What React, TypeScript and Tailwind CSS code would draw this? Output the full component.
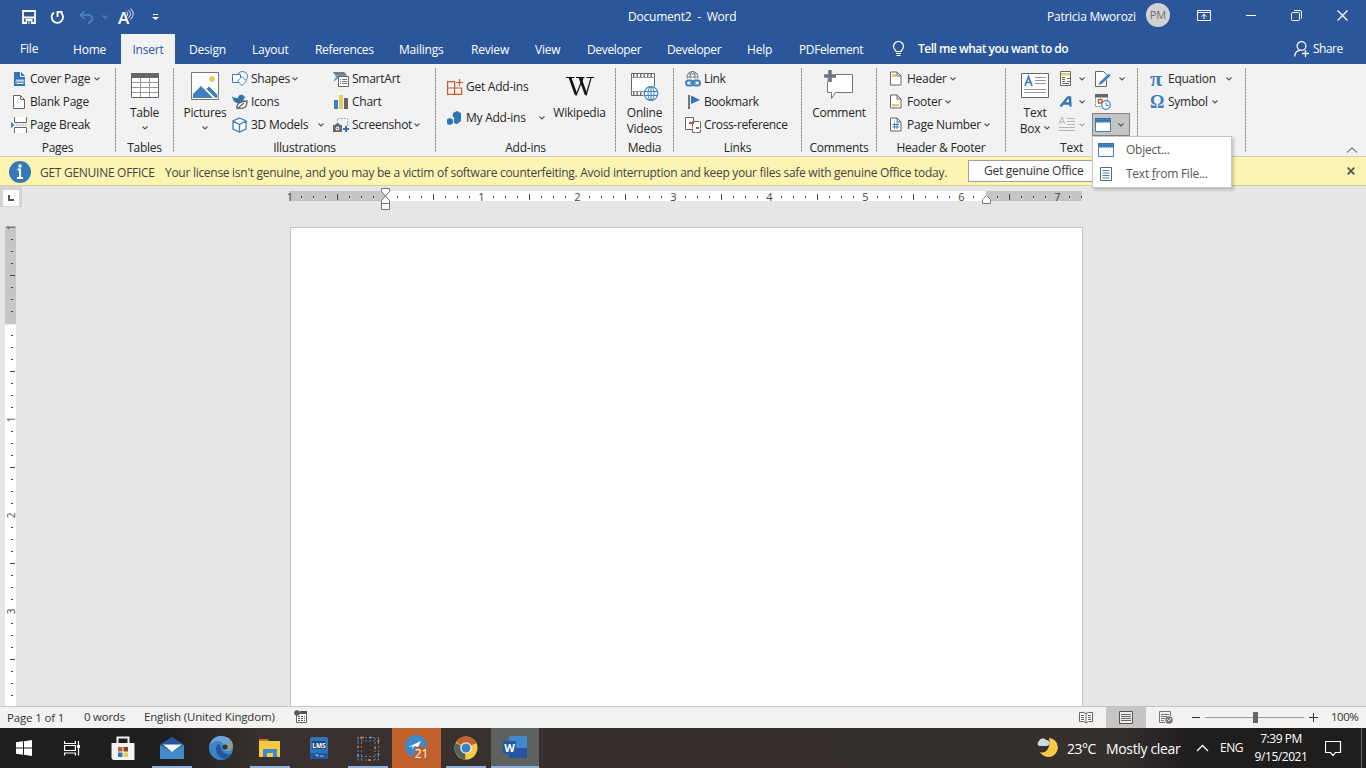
import React from "react";

type Kids = { children?: React.ReactNode };

function Chev({ c = "#555", className = "" }: { c?: string; className?: string }) {
  return (
    <svg width="6" height="4" viewBox="0 0 6 4" className={"shrink-0 " + className}>
      <path d="M.5 .5L3 3 5.5 .5" fill="none" stroke={c} strokeWidth="1.1" />
    </svg>
  );
}

function Ico({ w = 16, h = 16, children, className = "" }: Kids & { w?: number; h?: number; className?: string }) {
  return (
    <svg width={w} height={h} viewBox={`0 0 ${w} ${h}`} fill="none" className={"shrink-0 " + className}>
      {children}
    </svg>
  );
}

function Group({ label, className, children }: Kids & { label: string; className: string }) {
  return (
    <div className={"flex shrink-0 py-1 " + className}>
      <div className="flex min-w-0 flex-1 flex-col">
        <div className="-mt-px flex h-[69px] shrink-0">{children}</div>
        <div className="mt-[4px] h-4 shrink-0 text-center leading-4">{label}</div>
      </div>
      <div className="h-[84px] w-px shrink-0 bg-[repeating-linear-gradient(#8f8f8f_0_2px,#c8c8c8_2px_3px)]" />
    </div>
  );
}

function Row({ icon, text, gap = "gap-[3px]", chev, chevClass = "ml-px" }: { icon: React.ReactNode; text: string; gap?: string; chev?: boolean; chevClass?: string }) {
  return (
    <div className={"flex h-[23px] items-center " + gap}>
      {icon}
      <span className="leading-4">{text}</span>
      {chev && <Chev className={chevClass} />}
    </div>
  );
}

const blue = "#3c80c0";

const CoverIcon = (
  <Ico><path d="M2 1h6v5h5v9H2z" fill="#2e75b6" /><path d="M9 1l4 4H9z" fill="#2e75b6" /><path d="M3.500 8h9v5h-9z" fill="#6ba0d0" /><path d="M4 10.500l1.500-1.500L7 10.500 8.500 9l1.500 1.500 1.500-1.500M5 12.500h6" stroke="#fff" /></Ico>
);
const BlankIcon = (
  <Ico><path d="M1.500 1.500h7l4 4v9h-11z" fill="#fff" stroke="#666" /><path d="M8.500 1.500v4h4" stroke="#666" /></Ico>
);
const BreakIcon = (
  <Ico className="-ml-px"><path d="M3.500 0v5.500h12V0M3.500 16v-5.500h12V16" stroke="#666" fill="#fff" /><path d="M5 8h11" stroke="#aaa" strokeDasharray="2 1" /><path d="M0 5l3.500 3L0 11z" fill={blue} /></Ico>
);
const ShapesIcon = (
  <Ico><circle cx="10.500" cy="5.500" r="5" stroke={blue} fill="#f8f8f8" /><path d="M.500 3.500h8v8h-8z" stroke={blue} fill="#fff" /><path d="M10 5.500l4.500 4.500-4.500 4.500L5.500 10z" stroke={blue} fill="#fff" /></Ico>
);
const IconsIcon = (
  <Ico><path d="M0 2c2 2 4 2 6 2 0-3 3-4 5-3l1 1.500 2 .500-2 1c0 3-2 5-5 5.500C3 9 1 7 0 2z" fill="#2e75b6" /><path d="M5 15c-1-5 3-8 10-8 0 6-3 8.500-9 7l6-5" stroke="#666" fill="#fff" strokeWidth="1.300" /></Ico>
);
const CubeIcon = (
  <Ico><path d="M7.500 1L14 4v8l-6.500 3L1 12V4zM1 4l6.500 3.500L14 4M7.500 7.500V15" stroke={blue} strokeWidth="1.300" fill="#fff" /></Ico>
);
const SmartIcon = (
  <Ico><path d="M0 1h11l3 3-2 3H6L0 11l3-5z" fill="#6f98b4" /><path d="M0 1h11l2 2.500H3z" fill="#7a7a7a" /><path d="M5.500 5.500h10v10h-10z" fill="#fff" stroke="#666" /><path d="M7 8.500h1M9 8.500h5M7 10.500h1M9 10.500h5M7 12.500h1M9 12.500h5" stroke="#777" /></Ico>
);
const ChartIcon = (
  <Ico><path d="M1 6h4v9H1z" fill={blue} /><path d="M6 1h4v14H6z" fill="#e3cd6b" /><path d="M11 4h4v11h-4z" fill="#666" /></Ico>
);
const ShotIcon = (
  <Ico><path d="M4.500 7V1.500h10V10" stroke="#aaa" strokeDasharray="2 1" /><path d="M0 8h2l1-1.500h3L7 8h2v7H0z" fill="#666" /><circle cx="4.500" cy="11.500" r="1.900" fill="#fff" /><circle cx="4.500" cy="11.500" r=".9" fill="#666" /><path d="M13 9v6M10 12h6" stroke="#2e75b6" strokeWidth="2" /></Ico>
);
const GetIcon = (
  <Ico><path d="M.600 2.600h7v12.800h-7zM.600 9h14v6.400h-7M12.500 0v7M9 3.500h7" stroke="#c55a28" strokeWidth="1.200" /></Ico>
);
const MyIcon = (
  <Ico><path d="M6 3l4-2 4 2v8l-4 3-5-2z" fill="#2e75b6" /><circle cx="4" cy="11" r="4.500" fill="#f2f2f2" /><circle cx="2.800" cy="11.500" r="3.300" fill="#2e75b6" /><path d="M7 8l3 1v5l-3-1z" fill="#2e75b6" /></Ico>
);
const LinkIcon = (
  <Ico><circle cx="7.500" cy="6" r="5.500" stroke="#777" fill="#fff" /><ellipse cx="7.500" cy="6" rx="2.500" ry="5.500" stroke="#777" /><path d="M2 6h11M3 3h9" stroke="#777" /><rect x="1" y="9.500" width="14" height="5" rx="2.500" stroke="#f2f2f2" strokeWidth="4" /><rect x="1" y="9.500" width="7" height="5" rx="2.500" stroke={blue} strokeWidth="2" fill="#f2f2f2" /><rect x="8" y="9.500" width="7" height="5" rx="2.500" stroke={blue} strokeWidth="2" fill="#f2f2f2" /><path d="M5 12h6" stroke={blue} strokeWidth="1.500" /></Ico>
);
const FlagIcon = (
  <Ico><path d="M4 1v14" stroke="#666" strokeWidth="1.800" /><path d="M6 1.500l9 4.500-9 4z" fill="#2e75b6" /></Ico>
);
const CrossIcon = (
  <Ico><path d="M.500 .500h8v12h-8z" fill="#fff" stroke="#666" /><path d="M7.500 4.500h8v11h-8z" fill="#fff" stroke="#666" strokeDasharray="7 1" /><path d="M4 5h5v2H4zM11 10h3v2h-3z" fill="#c55a28" /></Ico>
);
const PageBase = <path d="M.500 1h6.500l4 4v9H.500zM7 1v4h4" fill="#fff" stroke="#666" />;
const HeaderIcon = <Ico w={12} h={15}>{PageBase}<path d="M2 3h4v3H2z" fill="#e3cd6b" /></Ico>;
const FooterIcon = <Ico w={12} h={15}>{PageBase}<path d="M2 10h7v2.500H2z" fill="#e3cd6b" /></Ico>;
const NumberIcon = <Ico w={12} h={15}>{PageBase}<path d="M4.500 5.500V12M7 5.500V12M2.500 7.500h6.500M2.500 10h6.500" stroke={blue} /></Ico>;
const ObjectIcon = (
  <Ico><path d="M.500 1.500h15v13H.500z" fill="#fff" stroke={blue} /><path d="M0 1h16v4.500H0z" fill="#2e75b6" /><path d="M2 2.500h13M1 4.500h14" stroke="#5b94c9" strokeDasharray="1 1" /></Ico>
);

function TitleBar() {
  return (
    <div className="flex h-[34px] shrink-0 items-center text-white">
      <div className="flex w-[628px] items-center pl-[22px]">
        <Ico w={14} h={14} className="mr-[14px]"><path d="M1 1h12v12H1zM1 7.500h12" stroke="#fff" strokeWidth="1.800" /><path d="M3.500 9h7v5h-7z" fill="#fff" /><path d="M5 11h1.500v3H5zM7.500 11H9v3H7.500z" fill="#2b579a" /></Ico>
        <Ico w={15} h={15} className="mr-[14px]"><path d="M4 2.500A5.700 5.700 0 1 0 11 2.700" stroke="#fff" strokeWidth="1.800" /><path d="M7.500 7V1.800h5" stroke="#fff" strokeWidth="1.800" /></Ico>
        <Ico w={15} h={14} className="mr-2"><path d="M5.500 1L1.500 5l4 4M2 5h7c6 0 5 7 0 8" stroke="#4f86c4" strokeWidth="1.500" /></Ico>
        <Chev c="#4f86c4" className="mr-[10px]" />
        <div className="-mt-[3px] flex h-5 w-[34px] items-start">
          <span className="font-['Open_Sans',sans-serif] text-[17px] leading-6 font-semibold">A</span>
          <Ico w={8} h={12} className="-ml-[3px] mt-[2px]"><path d="M.500 3.500c1.500 1.500 1.500 3 0 5M2.500 2c2.500 2.500 2.500 5 0 8M4.500 .500c3.500 3.500 3.500 7 0 11" stroke="#fff" strokeWidth=".9" /></Ico>
        </div>
        <Ico w={7} h={8}><path d="M1 1.500h5" stroke="#fff" /><path d="M0 4h7L3.500 7z" fill="#fff" /></Ico>
      </div>
      <span className="w-[419px] tracking-[-0.22px] whitespace-pre">Document2  -  Word</span>
      <span className="-mt-px w-[99px]">Patricia Mworozi</span>
      <div className="-mt-1 flex size-6 items-center justify-center rounded-full bg-[#d2d2d2] text-[11px] tracking-normal text-[#6d6d6d]">PM</div>
      <Ico w={14} h={11} className="-mt-1 ml-[27px]"><path d="M.500 .500h13v10H.500zM.500 2.500h13M7 9V4M4.500 6.500L7 4.500l2.500 2" stroke="#fff" /></Ico>
      <div className="-mt-1 ml-[35px] h-px w-[10px] bg-white" />
      <Ico w={11} h={11} className="-mt-1 ml-[35px]"><rect x=".5" y="2.500" width="8" height="8" rx="1" stroke="#fff" /><path d="M3 .500h6a1.500 1.500 0 0 1 1.500 1.500v6.500" stroke="#fff" /></Ico>
      <Ico w={11} h={11} className="-mt-1 ml-[35px]"><path d="M.500 .500l10 10M10.500 .500l-10 10" stroke="#fff" strokeWidth="1.200" /></Ico>
    </div>
  );
}

function Tabs() {
  return (
    <div className="flex h-[30px] shrink-0 items-center pl-5 tracking-[-0.2px] text-white">
      <span className="w-[53px]">File</span>
      <span className="w-12 pt-[2px]">Home</span>
      <span className="flex h-[30px] w-[54px] items-center justify-center bg-[#f2f2f2] pt-[2px] text-[#2b579a]">Insert</span>
      <span className="ml-[14px] w-[63px] pt-[2px]">Design</span>
      <span className="w-[63px] pt-[2px]">Layout</span>
      <span className="w-[84px] pt-[2px] tracking-[-0.35px]">References</span>
      <span className="w-[72px] pt-[2px]">Mailings</span>
      <span className="w-16 pt-[2px]">Review</span>
      <span className="w-[52px] pt-[2px]">View</span>
      <span className="w-20 pt-[2px] tracking-[-0.35px]">Developer</span>
      <span className="w-20 pt-[2px] tracking-[-0.35px]">Developer</span>
      <span className="w-[52px] pt-[2px]">Help</span>
      <span className="w-[93px] pt-[2px] tracking-[-0.4px]">PDFelement</span>
      <Ico w={13} h={16} className="mr-[13px]"><path d="M4 10.500C3.500 9 1.500 8 1.500 5.500a5 5 0 0 1 10 0C11.500 8 9.500 9 9 10.500zM4 12.500h5M4.500 14.500h4" stroke="#fff" strokeWidth="1.200" /></Ico>
      <span className="w-[376px] font-semibold tracking-[-0.51px]">Tell me what you want to do</span>
      <Ico w={16} h={16} className="mr-[3px]"><circle cx="7.500" cy="5" r="4.400" stroke="#fff" strokeWidth="1.200" /><path d="M.700 15.500C1 11.500 3 9.500 6 9.300M8 12.500h7M11.500 9v7" stroke="#fff" strokeWidth="1.300" /></Ico>
      <span className="tracking-[-0.5px]">Share</span>
    </div>
  );
}

function BigButton({ className, icon, lines, chev }: { className: string; icon: React.ReactNode; lines: string[]; chev?: boolean }) {
  return (
    <div className={"flex flex-col items-center pt-[3px] " + className}>
      <div className="flex h-[34px] shrink-0 items-start justify-center">{icon}</div>
      {lines.map((l) => (
        <div key={l} className="h-4 shrink-0 leading-[17px]">{l}</div>
      ))}
      {chev && <Chev className="mt-[6px]" />}
    </div>
  );
}

function Ribbon() {
  return (
    <div className="flex h-[93px] shrink-0 border-b border-[#cfcfcf] bg-[#f2f2f2] text-[#262626]">
      <Group label="Pages" className="w-[116px]">
        <div className="flex flex-col pl-3">
          <Row icon={CoverIcon} text="Cover Page" gap="gap-[2px]" chev chevClass="ml-[2px]" />
          <Row icon={BlankIcon} text="Blank Page" gap="gap-[2px]" />
          <Row icon={BreakIcon} text="Page Break" gap="gap-[3px]" />
        </div>
      </Group>
      <Group label="Tables" className="w-[58px]">
        <BigButton className="w-full" lines={["Table"]} chev icon={
          <Ico w={28} h={28} className="mt-[3px]"><path d="M.500 .500h27v24H.500z" fill="#fff" stroke="#666" /><path d="M0 0h28v5H0z" fill="#666" /><path d="M9.500 5v19M18.500 5v19M1 9.500h26M1 14.500h26M1 19.500h26" stroke="#999" /></Ico>
        } />
      </Group>
      <Group label="Illustrations" className="w-[262px]">
        <BigButton className="ml-[9px] w-11" lines={["Pictures"]} chev icon={
          <Ico w={28} h={28} className="mt-[2px]"><path d="M.500 .500h27v27H.500z" fill="#fff" stroke="#777" /><circle cx="21" cy="7" r="3" fill="#e3cd6b" /><path d="M2 26v-4l8-8 12 12z" fill={blue} /><path d="M15 17l3-3 9 9v3h-3z" fill={blue} stroke="#fff" strokeWidth=".8" /></Ico>
        } />
        <div className="ml-[5px] flex w-[101px] flex-col">
          <Row icon={ShapesIcon} text="Shapes" chev chevClass="-ml-px" />
          <Row icon={IconsIcon} text="Icons" />
          <Row icon={CubeIcon} text="3D Models" chev chevClass="ml-[7px]" />
        </div>
        <div className="flex flex-col">
          <Row icon={SmartIcon} text="SmartArt" />
          <Row icon={ChartIcon} text="Chart" />
          <Row icon={ShotIcon} text="Screenshot" chev chevClass="-ml-px" />
        </div>
      </Group>
      <Group label="Add-ins" className="w-[180px]">
        <div className="flex w-[117px] flex-col gap-2 pt-[8px] pl-[11px]">
          <Row icon={GetIcon} text="Get Add-ins" />
          <Row icon={MyIcon} text="My Add-ins" chev chevClass="ml-[10px]" />
        </div>
        <BigButton className="w-[53px]" lines={["Wikipedia"]} icon={
          <Ico w={28} h={20} className="mt-[7px]"><path d="M0 .500h8.500M10 .500h8.500M20.500 .500H28" stroke="#111" /><path d="M4 .500l6 17M14 .500l6 17" stroke="#111" strokeWidth="2.600" /><path d="M10 18.500L17 1M20 18.500L25 1" stroke="#111" strokeWidth="1.200" /></Ico>
        } />
      </Group>
      <Group label="Media" className="w-[58px]">
        <BigButton className="w-full" lines={["Online", "Videos"]} icon={
          <Ico w={29} h={29} className="mt-[3px]"><path d="M1.500 .500h23v22h-23z" fill="#fff" stroke="#666" /><path d="M1.500 4.500h23M1.500 18.500h23" stroke="#999" /><path d="M3 2.500h21M3 20.500h20" stroke="#777" strokeWidth="3" strokeDasharray="1.500 2" /><circle cx="21" cy="20.500" r="8" fill="#f2f2f2" /><circle cx="21" cy="20.500" r="6.800" stroke={blue} fill="#fff" strokeWidth="1.200" /><ellipse cx="21" cy="20.500" rx="3" ry="6.800" stroke={blue} /><path d="M15 18.500h12M15 22.500h12M21 14v13" stroke={blue} /></Ico>
        } />
      </Group>
      <Group label="Links" className="w-[128px]">
        <div className="flex flex-col pl-[11px] tracking-[-0.35px]">
          <Row icon={LinkIcon} text="Link" />
          <Row icon={FlagIcon} text="Bookmark" />
          <Row icon={CrossIcon} text="Cross-reference" />
        </div>
      </Group>
      <Group label="Comments" className="w-[75px]">
        <BigButton className="w-full" lines={["Comment"]} icon={
          <Ico w={30} h={30}><path d="M3.500 4.500h25v18h-17l-4 6v-6h-4z" fill="#fff" stroke="#777" /><path d="M6 0v12M0 6h12" stroke="#f2f2f2" strokeWidth="5" /><path d="M6 0v12M0 6h12" stroke="#67767f" strokeWidth="3.500" /></Ico>
        } />
      </Group>
      <Group label="Header & Footer" className="w-[129px]">
        <div className="flex flex-col pl-[13px]">
          <Row icon={HeaderIcon} text="Header" gap="gap-[5px]" chev chevClass="-ml-[2px]" />
          <Row icon={FooterIcon} text="Footer" gap="gap-[5px]" chev chevClass="-ml-[2px]" />
          <Row icon={NumberIcon} text="Page Number" gap="gap-[5px]" chev chevClass="-ml-[2px]" />
        </div>
      </Group>
      <Group label="Text" className="w-[132px]">
        <div className="ml-[11px] flex w-9 flex-col items-center pt-[3px]">
          <Ico w={28} h={34}><path d="M.500 3.500h27v24H.500z" fill="#fff" stroke="#666" /><path d="M4 16L7.500 6.500 11 16M5.300 12.500h4.400" stroke={blue} strokeWidth="1.700" /><path d="M14 7.500h11M14 10.500h11M14 13.500h11M3 19.500h22M3 22.500h22" stroke="#999" /></Ico>
          <span className="h-4 leading-[17px]">Text</span>
          <span className="flex h-4 items-center gap-1 leading-[17px]">Box <Chev /></span>
        </div>
        <div className="ml-[6px] flex w-[33px] flex-col">
          <div className="flex h-[23px] items-center gap-1"><Ico><path d="M1.500 .500h10v14h-10z" fill="#fff" stroke="#666" /><path d="M2 2h9v2.500H2z" fill="#e3cd6b" /><path d="M3 6.500h3M8 7.500h3M3 8.500h3M8 10.500h3M3 10.500h3M3 12.500h7" stroke="#666" /></Ico><Chev /></div>
          <div className="flex h-[23px] items-center gap-1"><Ico><path d="M1.500 12.500L9 3.500h2l.500 9M4.500 9.500h7" stroke="#2e75b6" strokeWidth="2.400" /></Ico><Chev /></div>
          <div className="flex h-[23px] items-center gap-1"><Ico><path d="M0 7L3 0l3 7M1 5h4M8 1.500h8M8 4.500h8M8 7.500h8M0 10.500h16M0 13.500h16" stroke="#b5b5b5" /></Ico><Chev c="#aaa" /></div>
        </div>
        <div className="flex w-[38px] flex-col">
          <div className="flex h-[23px] items-center gap-[8px] pl-[3px]"><Ico><path d="M.500 .500h8l3 3v12H.500z" fill="#fff" stroke="#666" /><path d="M16 4.500L7 13l-4 1.500L4.500 11 13.500 2.500z" fill={blue} stroke="#fff" strokeWidth=".5" /></Ico><Chev /></div>
          <div className="flex h-[23px] items-center pl-[3px]"><Ico><path d="M.500 1.500h12v11H.500z" fill="#fff" stroke="#888" strokeDasharray="2 1" /><path d="M0 0h13v3.500H0z" fill="#666" /><path d="M3.500 5.500h3.500v3.500H3.500z" stroke="#c55a28" strokeWidth="1.300" /><circle cx="11" cy="11" r="4.300" fill="#fff" stroke={blue} strokeWidth="1.200" /><path d="M11 8.500v3h2.500" stroke={blue} /></Ico></div>
          <div className="flex h-[23px] items-center gap-[7px] border border-[#838383] bg-[#c5c5c5] pl-[2px]">{ObjectIcon}<Chev /></div>
        </div>
      </Group>
      <Group label="" className="w-[108px]">
        <div className="flex flex-col pl-3">
          <Row icon={<span className="w-[15px] font-['Liberation_Serif',serif] text-[22px] leading-5 font-bold text-[#3c80c0]">π</span>} text="Equation" chev chevClass="ml-[7px]" />
          <Row icon={<span className="w-[15px] font-['Liberation_Serif',serif] text-[18px] leading-5 font-bold text-[#3c80c0]">Ω</span>} text="Symbol" gap="gap-[3px]" chev chevClass="ml-px" />
        </div>
      </Group>
      <Ico w={12} h={6} className="mt-[83px] ml-auto mr-[8px]"><path d="M1 5.500L6 .800l5 4.700" stroke="#444" /></Ico>
    </div>
  );
}

function LicenseBar() {
  return (
    <div className="flex h-[29px] shrink-0 items-center border-b border-[#d8d28a] bg-[#fcf4b3] pl-[9px] text-[#444]">
      <Ico w={22} h={22} className="mt-[2px] mr-[9px]"><circle cx="11" cy="11" r="11" fill="#337ab7" /><circle cx="11" cy="5" r="1.700" fill="#fff" /><path d="M8.500 8.500H11v8.500M8 17h6" stroke="#fff" strokeWidth="2" /></Ico>
      <span className="w-[125px] pt-[3px] tracking-[-0.28px]">GET GENUINE OFFICE</span>
      <span className="w-[803px] pt-[3px] tracking-[-0.282px]">Your license isn't genuine, and you may be a victim of software counterfeiting. Avoid interruption and keep your files safe with genuine Office today.</span>
      <span className="flex h-[22px] w-[132px] items-center border border-[#a0a0a0] bg-[#fdfdfd] pl-[15px] text-[#333]">Get genuine Office</span>
      <Ico w={8} h={8} className="mr-[11px] ml-auto"><path d="M.700 .700l6.600 6.600M7.300 .700L.700 7.300" stroke="#555" strokeWidth="1.800" /></Ico>
    </div>
  );
}

function HRuler() {
  const ticks = Array.from({ length: 67 }, (_, i) => i);
  return (
    <svg width="796" height="24" viewBox="288 186 796 24" className="shrink-0 overflow-visible">
      <path d="M289 191h97v10h-97zM986 191h96v10h-96z" fill="#c5c5c5" />
      <path d="M386 191h600v10H386z" fill="#fff" />
      {ticks.map((i) => {
        const x = 290 + i * 12 - (i > 0 ? 0.5 : 0);
        if (i === 8) return null;
        if (i % 8 === 0)
          return <text key={i} x={x} y="200.500" fontSize="11" textAnchor="middle" fill="#444" className="tracking-normal">{Math.abs(i / 8 - 1)}</text>;
        return i % 8 === 4 ? <path key={i} d={`M${x - 0.5} 194h1v6h-1z`} fill="#444" /> : <path key={i} d={`M${x - 0.5} 196h1v2h-1z`} fill="#444" />;
      })}
      <path d="M381.500 188.500h8v3l-4 4.500-4-4.500zM381.500 203v-2.500l4-4.500 4 4.500v9h-8zM381.500 203.500h8" fill="#fff" stroke="#777" />
      <path d="M982.500 203.500v-4l4-4 4 4v4z" fill="#fff" stroke="#777" />
    </svg>
  );
}

function VRuler() {
  const ticks = Array.from({ length: 40 }, (_, i) => i);
  return (
    <svg width="11" height="480" viewBox="5 226 11 480" className="mt-[19px] ml-[5px] shrink-0 overflow-visible">
      <path d="M5 226h11v98H5z" fill="#c5c5c5" />
      <path d="M5 325h11v381H5z" fill="#fff" />
      {ticks.map((i) => {
        const y = 227.5 + i * 12;
        if (i === 8) return null;
        if (i % 8 === 0)
          return <text key={i} fontSize="10" textAnchor="middle" fill="#444" transform={`translate(15 ${y}) rotate(-90)`}>{Math.abs(i / 8 - 1)}</text>;
        return i % 8 === 4 ? <path key={i} d={`M10 ${y - 0.5}h5v1h-5z`} fill="#444" /> : <path key={i} d={`M11 ${y - 0.5}h2v1h-2z`} fill="#444" />;
      })}
    </svg>
  );
}

function Workspace() {
  return (
    <div className="flex h-[520px] shrink-0 bg-[#e6e6e6]">
      <div className="flex w-[288px] flex-col">
        <div className="h-[21px] w-[22px] shrink-0 bg-[#d3d4d6] pt-[4px] pl-[3px]">
          <div className="flex size-4 items-center justify-center bg-[#fbfbfb]"><Ico w={6} h={6}><path d="M1 0v5h5" stroke="#555" strokeWidth="2" /></Ico></div>
        </div>
        <VRuler />
      </div>
      <div className="flex flex-col">
        <HRuler />
        <div className="mt-[17px] ml-[2px] h-[479px] w-[793px] border border-b-0 border-[#c3c3c3] bg-white" />
      </div>
    </div>
  );
}

function StatusBar() {
  return (
    <div className="flex h-[22px] shrink-0 items-center border-t border-[#c3c3c3] bg-[#f2f2f2] pl-[7px] text-[11.500px] text-[#333]">
      <span className="w-[77px] pt-px tracking-[-0.15px]">Page 1 of 1</span>
      <span className="-mt-px w-[60px]">0 words</span>
      <span className="-mt-px w-[150px] tracking-[-0.16px]">English (United Kingdom)</span>
      <Ico w={14} h={13} className="-mt-[2px]"><path d="M2.500 3.500h10v9h-10z" fill="#fff" stroke="#666" /><path d="M6 1h7v3H6z" fill="#555" /><circle cx="3" cy="3" r="2.800" fill="#555" /><path d="M4 6.500h7M4 8.500h7M4 10.500h7" stroke="#555" strokeDasharray="2 1" /></Ico>
      <div className="ml-auto flex h-full items-center">
        <Ico w={14} h={13} className="mr-[13px] -mt-px"><path d="M.500 1.500h4l2.500 1 2.500-1h4v9h-4L7 12l-2.500-1.500h-4zM7 2.500V12M2 4.500h3M2 6.500h3M2 8.500h3M9 4.500h3M9 6.500h3M9 8.500h3" stroke="#666" fill="#fff" /></Ico>
        <div className="flex h-full w-10 items-center justify-center bg-[#c5c5c5]"><Ico w={14} h={13}><path d="M.500 .500h13v12H.500z" fill="#eee" stroke="#555" /><path d="M2 3.500h10M2 5.500h10M2 7.500h10M2 9.500h10" stroke="#666" /></Ico></div>
        <Ico w={14} h={13} className="-mt-px mr-[19px] ml-[13px]"><path d="M6 11.500H.500V.500h11V5M2 3.500h8M2 5.500h6M2 7.500h4M2 9.500h3" stroke="#777" /><circle cx="10" cy="9" r="3.700" fill="#777" /><path d="M8 8l2 2 2-3" stroke="#ddd" /></Ico>
        <div className="h-px w-2 bg-[#333]" />
        <div className="ml-[5px] flex h-3 w-[99px] items-center">
          <div className="h-px w-12 bg-[#999]" />
          <div className="h-[11px] w-[5px] bg-[#666]" />
          <div className="h-px flex-1 bg-[#999]" />
        </div>
        <Ico w={9} h={9} className="ml-[5px] mr-[13px]"><path d="M0 4.500h9M4.500 0v9" stroke="#333" /></Ico>
        <span className="-mt-px w-[35px] tracking-[-0.5px]">100%</span>
      </div>
    </div>
  );
}

function TaskApp({ children, line, bg = "" }: Kids & { line?: boolean; bg?: string }) {
  return (
    <div className={"flex h-10 w-[49px] flex-col items-center " + bg}>
      <div className="flex h-[38px] items-center pt-[2px]">{children}</div>
      {line && <div className="h-[2px] w-10 bg-[#8eb0d8]" />}
    </div>
  );
}

function Taskbar() {
  return (
    <div className="flex h-10 shrink-0 items-center bg-[linear-gradient(90deg,#1f1e1d_0,#1f1e1d_160px,#383130_260px,#352f2e_1120px,#1f1e1d_1190px)] tracking-normal text-white">
      <div className="flex w-12 justify-center"><Ico><path d="M0 2.300l7-1v6.200H0zM8 1.200L16 0v7.500H8zM0 8.500h7v6.200l-7-1zM8 8.500h8V16l-8-1.200z" fill="#fff" /></Ico></div>
      <div className="flex w-[50px] justify-center pr-[3px]"><Ico><path d="M.600 1v2.500h10.800V1M.600 5.500h10.800v5H.600zM.600 15.500v-2.500h10.800v2.500M14.500 1v14.500" stroke="#fff" strokeWidth="1.200" /><path d="M13 5h3v3h-3z" fill="#fff" /></Ico></div>
      <TaskApp><Ico w={24} h={25}><path d="M6.500 7V1.500h11V7" stroke="#f3f3f3" strokeWidth="2" /><path d="M.500 7h23v17H2L.500 22z" fill="#f3f3f3" /><path d="M7 11h4.500v4.500H7z" fill="#c4602c" /><path d="M12.500 11H17v4.500h-4.500z" fill="#7a4b1d" /><path d="M7 16.500h4.500V21H7z" fill="#2b79bd" /><path d="M12.500 16.500H17V21h-4.500z" fill="#f5c842" /></Ico></TaskApp>
      <TaskApp line><Ico w={24} h={24}><path d="M0 8.500L12 1l12 7.500V23H0z" fill="#2456a0" /><path d="M0 9l12 7 12-7v14H0z" fill="#418bc9" /><path d="M3 8.500h19L12 16z" fill="#f5f5f5" /></Ico></TaskApp>
      <TaskApp><Ico w={24} h={24}><circle cx="12" cy="12" r="12" fill="#3a85c6" /><path d="M12 0c7 0 12 4 12 10 0 3-3 5-6 5-3 0-4-1-3-3 0-4-2-6-5-7C7 4 3 6 0 10 2 4 6 0 12 0z" fill="#6aa5d3" /><path d="M20 3c3 2 4 5 4 8-1 3-4 4-7 3-2-1-1-2-.500-3C20 9 19 5 20 3z" fill="#8d9a8e" /><circle cx="16" cy="11" r="2.500" fill="#383130" /><path d="M9 8c-4 4-2 14 7 15 3-1 5-3 6.500-5.500C18 20 12 17 11 9z" fill="#2456a0" /></Ico></TaskApp>
      <TaskApp line><Ico w={24} h={22}><path d="M1 2h8l2 2h11v16H1z" fill="#f8c944" /><path d="M1 2h8l2 2H1z" fill="#c87426" /><path d="M5 20v-8h14v8h-4v-4H9v4z" fill="#3e8acb" /></Ico></TaskApp>
      <TaskApp><Ico w={20} h={25}><rect x="1" y="1" width="18" height="22" rx="2" fill="#2f73b8" /><path d="M3 5h14v8H3z" fill="#204a7c" /><text x="10" y="12" fontSize="6.500" fontWeight="700" textAnchor="middle" fill="#fff">LMS</text><path d="M1 17h18v4l-2 2H3l-2-2z" fill="#2456a0" /><path d="M6 19h3v2M11 20h3v1" stroke="#8fc0ea" /></Ico></TaskApp>
      <TaskApp line><Ico w={24} h={25}><path d="M1 1.500h22M1 5h22M1 20.500h22M1 24h22M2 2v22M5.500 2v22M19 2v22M22.500 2v22" stroke="#5d7185" strokeWidth="1.200" strokeDasharray="2 2" /><path d="M4 1.500h4M22.500 4v3M2 10v2M12 24h3M19 11v2" stroke="#e07a2c" strokeWidth="1.500" /><path d="M6.500 7h11v12h-11z" fill="#352f2e" /><path d="M2 18v3M13 1.500h3M22.500 17v2" stroke="#57a0e8" strokeWidth="1.500" /></Ico></TaskApp>
      <TaskApp bg="bg-[#c0612d]"><Ico w={26} h={26}><circle cx="12" cy="11" r="11" fill="#3b8bc8" /><path d="M4 12L17 6l-3 6-3-1-3 3 1-3z" fill="#fff" /><circle cx="17.500" cy="18.500" r="7.500" fill="#c0612d" /><text x="17.500" y="23" fontSize="12" textAnchor="middle" fill="#fff">21</text></Ico></TaskApp>
      <TaskApp line><Ico w={24} h={24}><circle cx="12" cy="12" r="11.500" fill="#f6ca45" /><path d="M12 12L2 6C6-1.500 18-1.500 22.500 7z" fill="#c4602c" /><path d="M12 12L1.500 7C-1.500 14 3 22.500 11 23.500z" fill="#56625c" /><circle cx="12" cy="12" r="5.800" fill="#f3f3f3" /><circle cx="12" cy="12" r="4.500" fill="#3b82c4" /></Ico></TaskApp>
      <div className="ml-px flex h-10 w-12 flex-col items-center bg-[#5d6260]">
        <div className="flex h-[38px] items-center pt-px"><Ico w={24} h={23}><path d="M6 0h18v12H6z" fill="#3e8acb" /><path d="M6 12h18v10H6z" fill="#2456a0" /><path d="M0 5h13v13H0z" fill="#1f5ba8" /><text x="6.500" y="15.500" fontSize="11" fontWeight="700" textAnchor="middle" fill="#fff">W</text></Ico></div>
        <div className="h-[2px] w-full bg-[#8eb0d8]" />
      </div>
      <div className="ml-auto flex items-center">
        <Ico w={22} h={22} className="mr-2"><path d="M12 1a9.500 9.500 0 1 1-9 14c6 2 11-4 9-14z" fill="#f8c944" /><path d="M2 9a3 3 0 0 1 0-5 4 4 0 0 1 7-1 3 3 0 0 1 1 6z" fill="#cdd9e5" /></Ico>
        <span className="w-[39px] text-[14px] tracking-[-0.5px]">23°C</span>
        <span className="w-[90px] text-[14px] tracking-[-0.35px]">Mostly clear</span>
        <Ico w={13} h={8} className="mr-[11px]"><path d="M1 7l5.500-5.500L12 7" stroke="#fff" strokeWidth="1.300" /></Ico>
        <span className="w-[31px] text-[12px] tracking-[-0.5px]">ENG</span>
        <div className="flex w-[60px] flex-col items-center text-[12px] leading-[18px] tracking-[-0.45px]"><span>7:39 PM</span><span>9/15/2021</span></div>
        <Ico w={17} h={17} className="ml-[14px]"><path d="M.500 1.500h15v11h-5l-2.500 3-2.500-3h-5z" stroke="#fff" strokeWidth="1.200" /></Ico>
        <div className="ml-[19px] mr-1 h-10 w-px bg-[#666]" />
      </div>
    </div>
  );
}

function ObjectMenu() {
  return (
    <div className="absolute top-[136px] left-[1092px] flex h-[52px] w-[140px] flex-col border border-[#c6c6c6] bg-white pt-px text-[#555] shadow-[2px_2px_3px_rgba(0,0,0,0.2)]">
      <div className="flex h-6 items-center pl-[5px]"><span className="flex w-7">{ObjectIcon}</span>Object...</div>
      <div className="flex h-6 items-center pl-[5px]"><span className="flex w-7"><Ico><path d="M2.500 1.500h11v13h-11z" fill="#fff" stroke="#666" /><path d="M4.500 4.500h7M4.500 7h7M4.500 9.500h7M4.500 12h7" stroke={blue} /></Ico></span><span className="whitespace-pre">Text <u>f</u>rom File...</span></div>
    </div>
  );
}

export default function App() {
  return (
    <div className="relative flex h-[768px] w-[1366px] flex-col overflow-hidden bg-[#2b579a] font-['Open_Sans','Noto_Sans',sans-serif] text-[12px] tracking-[-0.25px] whitespace-nowrap">
      <TitleBar />
      <Tabs />
      <Ribbon />
      <LicenseBar />
      <Workspace />
      <StatusBar />
      <Taskbar />
      <ObjectMenu />
    </div>
  );
}
